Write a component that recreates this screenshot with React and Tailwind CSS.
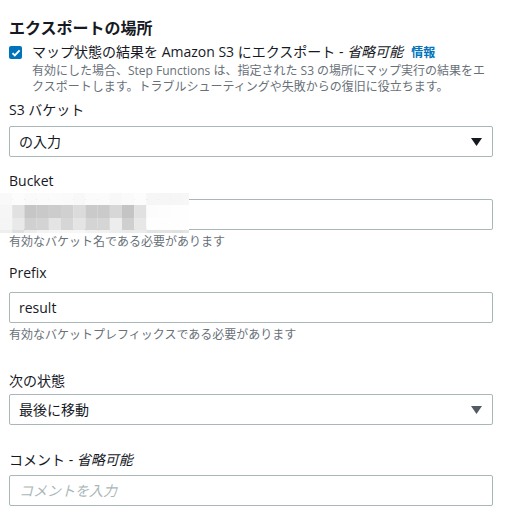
import React from 'react'

const FONT = { fontFamily: '"Open Sans", "Noto Sans CJK JP", sans-serif' }

const BLUR = [
  ['#f8f9f8', '#fbfcfb', '#f9faf9', '#fafbfa', '#fafbfa', '#f9faf9', '#f7f8f7', '#fafbfa', '#fafbfa', '#f7f8f7', '#f9faf9', '#fbfcfb', '#f5f6f5', '#f5f6f5', '#f5f6f5', '#f6f7f6'],
  ['#f5f6f5', '#e0e1e0', '#c5c6c5', '#c8c9c8', '#cbcccb', '#cfd0cf', '#dadbda', '#c9cac9', '#c9cac9', '#d6d7d6', '#c3c4c3', '#e0e1e0', '#fbfcfb', '#fcfdfc', '#fdfefd', '#fdfefd'],
  ['#f4f5f4', '#e8e9e8', '#cfd0cf', '#d2d3d2', '#e3e4e3', '#d5d6d5', '#e3e4e3', '#d3d4d3', '#d4d5d4', '#ecedec', '#cecfce', '#e6e7e6', '#fdfefd', '#fdfefd', '#fdfefd', '#fdfefd'],
  ['#eef0ef', '#dfe1e0', '#ebeceb', '#f2f3f2', '#f4f5f4', '#f5f6f5', '#f6f7f6', '#f1f2f1', '#eff0ef', '#eceded', '#eaebea', '#ebeceb', '#e2e4e3', '#e2e4e3', '#e0e2e1', '#e4e6e5'],
]

function Pixelated() {
  return (
    <svg width="189" height="40" className="absolute left-[-9px] top-[-6px]" viewBox="0 0 189 40">
      {BLUR.map((row, r) =>
        row.map((c, i) => (
          <rect key={`${r}-${i}`} x={i * 12.2} y={[0, 12, 25, 37][r]} width="12.3" height={r === 3 ? 3 : 13} fill={c} />
        ))
      )}
    </svg>
  )
}

function Arrow({ color }) {
  return (
    <svg width="11" height="8" viewBox="0 0 11 8" className="shrink-0">
      <path d="M0 0h11L5.5 8z" fill={color} />
    </svg>
  )
}

function Label({ children, className = '' }) {
  return <div className={`text-[14px] leading-[20px] text-[#16191f] ${className}`}>{children}</div>
}

function Box({ children, className = '' }) {
  return (
    <div className={`flex h-[31px] items-center justify-between rounded-[2px] border border-[#aab7b8] bg-white pl-[9px] pr-[10px] text-[14px] text-[#16191f] ${className}`}>
      {children}
    </div>
  )
}

function Hint({ children }) {
  return <div className="mt-[4px] text-[12px] leading-[16px] text-[#687078]">{children}</div>
}

export default function App() {
  return (
    <div className="min-h-screen bg-white" style={FONT}>
      <div className="w-[493px] pl-[9px] pt-[16px]">
        <h3 className="text-[16px] font-bold leading-[24px] text-[#16191f]">エクスポートの場所</h3>

        <div className="mt-[2px] flex items-start">
          <span className="mt-[4px] flex h-[13px] w-[13px] shrink-0 items-center justify-center rounded-[2px] bg-[#0073bb]">
            <svg width="10" height="10" viewBox="0 0 10 10">
              <path d="M1.5 5.2l2.3 2.3L8.6 2.3" fill="none" stroke="white" strokeWidth="1.9" />
            </svg>
          </span>
          <div className="ml-[10px]">
            <div className="text-[14px] leading-[20px] text-[#16191f]">
              マップ状態の結果を Amazon S3 にエクスポート - <i>省略可能</i>
              <span className="ml-[8px] text-[12px] font-bold text-[#0073bb]">情報</span>
            </div>
            <div className="text-[12px] leading-[16px] text-[#687078]">
              有効にした場合、Step Functions は、指定された S3 の場所にマップ実行の結果をエクスポートします。トラブルシューティングや失敗からの復旧に役立ちます。
            </div>
          </div>
        </div>

        <Label className="mt-[5px]">S3 バケット</Label>
        <Box className="mt-[6px]">
          <span>の入力</span>
          <Arrow color="#16191f" />
        </Box>

        <Label className="mt-[14px]">Bucket</Label>
        <div className="relative mt-[8px]">
          <Box />
          <Pixelated />
        </div>
        <Hint>有効なバケット名である必要があります</Hint>

        <Label className="mt-[13px]">Prefix</Label>
        <Box className="mt-[9px]">
          <span>result</span>
        </Box>
        <Hint>有効なバケットプレフィックスである必要があります</Hint>

        <Label className="mt-[28px]">次の状態</Label>
        <Box className="mt-[3px]">
          <span>最後に移動</span>
          <Arrow color="#545b64" />
        </Box>

        <Label className="mt-[25px]">
          コメント - <i>省略可能</i>
        </Label>
        <Box className="mt-[5px]">
          <span className="italic text-[#aab7b8]">コメントを入力</span>
        </Box>
      </div>
    </div>
  )
}
